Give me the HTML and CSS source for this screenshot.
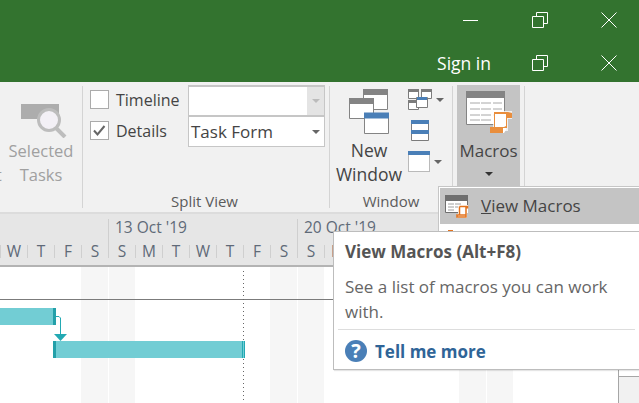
FILE: index.html
```html
<!DOCTYPE html>
<html lang="en">
<head>
<meta charset="utf-8">
<title>Project</title>
<link rel="stylesheet" href="styles.css">
</head>
<body>
<div class="app">
  <header class="titlebar">
    <div class="winrow">
      <svg class="cap cap-min" width="16" height="16" viewBox="0 0 16 16"><path d="M0 8.500h15" stroke="#fff" fill="none"/></svg>
      <svg class="cap" width="16" height="16" viewBox="0 0 16 16"><path d="M.5 4.500h11v11H.5zM4.500 4V.5h11v11H12" stroke="#fff" fill="none"/></svg>
      <svg class="cap cap-x" width="16" height="16" viewBox="0 0 16 16"><path d="M.5.500l15 15M15.500.500l-15 15" stroke="#fff" fill="none"/></svg>
    </div>
    <div class="winrow winrow-2">
      <span class="signin">Sign in</span>
      <svg class="cap" width="16" height="16" viewBox="0 0 16 16"><path d="M.5 4.500h11v11H.5zM4.500 4V.5h11v11H12" stroke="#fff" fill="none"/></svg>
      <svg class="cap cap-x" width="16" height="16" viewBox="0 0 16 16"><path d="M.5.500l15 15M15.500.500l-15 15" stroke="#fff" fill="none"/></svg>
    </div>
  </header>

  <section class="ribbon">
    <div class="group group-zoom">
      <span class="clip-t">t</span>
      <div class="bigbtn disabled">
        <svg class="icon-sel" width="46" height="34" viewBox="0 0 46 34">
          <rect x="0" y="0" width="38" height="15" fill="#adadad"/>
          <circle cx="28" cy="16" r="10.500" fill="#f3f0f6" stroke="#bdbdbd" stroke-width="3"/>
          <path d="M35 24l9 9" stroke="#bdbdbd" stroke-width="4" fill="none"/>
        </svg>
        <span class="biglabel">Selected<br>Tasks</span>
      </div>
    </div>
    <div class="group group-split">
      <div class="group-body split-body">
        <div class="checks">
          <div class="checkrow"><span class="checkbox"></span><span class="checktext">Timeline</span></div>
          <div class="checkrow"><span class="checkbox"><svg width="17" height="17" viewBox="0 0 17 17"><path d="M3 8.500l3.500 4 7-8.500" stroke="#666" stroke-width="2" fill="none"/></svg></span><span class="checktext">Details</span></div>
        </div>
        <div class="combos">
          <div class="combo combo-off"><span class="combo-btn"><i class="tri tri-off"></i></span></div>
          <div class="combo"><span class="combo-text">Task Form</span><span class="combo-btn"><i class="tri"></i></span></div>
        </div>
      </div>
      <div class="grouplabel grouplabel-split">Split View</div>
    </div>
    <div class="group group-window">
      <div class="group-body window-body">
        <div class="bigbtn newwin">
          <svg width="42" height="47" viewBox="0 0 42 47">
            <path d="M14.500 1.500h24v20h-24z" fill="#fff" stroke="#848484"/><rect x="14" y="1" width="25" height="6" fill="#848484"/>
            <path d="M.5 10.500h24v20h-24z" fill="#fff" stroke="#848484"/><rect x="0" y="10" width="25" height="6" fill="#848484"/>
            <path d="M15.500 25.500h24v20h-24z" fill="#fff" stroke="#848484"/><path d="M15 24.500h25v6H15z" fill="#4a7fb7"/>
          </svg>
          <span class="biglabel">New<br>Window</span>
        </div>
        <div class="smallcol">
          <div class="smallbtn">
            <svg width="24" height="21" viewBox="0 0 24 21">
              <path d="M.5.500h10v9h-10zM13.500.500h10v9h-10zM.5 11.500h10v9h-10z" fill="#fff" stroke="#7c7c7c"/>
              <path d="M0 0h11v3H0zM13 0h11v3H13zM0 11h11v3H0z" fill="#7c7c7c"/>
              <path d="M8.500 8.500h11v10h-11z" fill="#fff" stroke="#7c7c7c"/><path d="M9 8h10v3H9z" fill="#4a7fb7"/>
            </svg>
            <i class="tri"></i>
          </div>
          <div class="smallbtn smallbtn-mid">
            <svg width="18" height="21" viewBox="0 0 18 21">
              <path d="M.5.500h17v20H.5z" fill="#fff" stroke="#7c7c7c"/>
              <path d="M0 0h18v4H0zM0 10h18v4H0z" fill="#4a7fb7"/>
            </svg>
          </div>
          <div class="smallbtn">
            <svg width="22" height="21" viewBox="0 0 22 21">
              <path d="M.5 3.500h21v17H.5z" fill="#fff" stroke="#7c7c7c" stroke-dasharray="1 1"/>
              <path d="M0 0h22v4H0z" fill="#4a7fb7"/>
            </svg>
            <i class="tri"></i>
          </div>
        </div>
      </div>
      <div class="grouplabel">Window</div>
    </div>
    <div class="group group-macros">
      <div class="macrobtn">
        <svg width="46" height="43" viewBox="0 0 46 43">
          <path d="M.5.500h38v33H.5z" fill="#fff" stroke="#848484"/>
          <rect x="0" y="0" width="39" height="7" fill="#848484"/>
          <path d="M4 12h10M15 12h10M27 12h9M4 18h10M15 18h10M27 18h9M4 24h10M15 24h10M27 24h9M4 29h10M15 29h10" stroke="#a8a8a8" fill="none"/>
          <path d="M27 20h19v8h-4v12H27z" fill="#fff" opacity=".75"/>
          <path d="M28 21h14l4 1v5h-5v10h-3v-1H28z" fill="#e98e3d"/>
          <path d="M29 23h11v12l-4 2h-7z" fill="#fff"/>
          <path d="M24 36h14v6H24z" fill="#e98e3d"/>
          <path d="M37 37h3v2l-2 3h-1z" fill="#fff"/>
        </svg>
        <span class="macrolabel">Macros</span>
        <i class="tri tri-dark"></i>
      </div>
    </div>
    <div class="group group-rest"></div>
  </section>

  <section class="timescale">
    <div class="weeks">
      <span class="week week-blank"></span>
      <span class="week">13 Oct '19</span>
      <span class="week">20 Oct '19</span>
    </div>
    <div class="days">
      <span class="day">W</span><span class="day">T</span><span class="day">F</span><span class="day">S</span><span class="day">S</span><span class="day">M</span><span class="day">T</span><span class="day">W</span><span class="day">T</span><span class="day">F</span><span class="day">S</span><span class="day">S</span><span class="day">M</span>
    </div>
  </section>

  <section class="chart">
    <div class="shade shade-a"></div>
    <div class="shade shade-b"></div>
    <div class="shade shade-c"></div>
    <div class="shade shade-d"></div>
    <div class="shade shade-e"></div>
    <div class="shade shade-f"></div>
    <div class="hline"></div>
    <div class="dotted"></div>
    <div class="bar bar-1"></div>
    <div class="bar bar-2"></div>
    <svg class="link" width="14" height="25" viewBox="0 0 14 25">
      <path d="M3 .5h3l1.500 1.500v16" stroke="#23a9b3" fill="none"/>
      <path d="M1 18h13l-6.500 7z" fill="#23a9b3"/>
    </svg>
    <div class="pane-corner"></div>
  </section>

  <div class="menu">
    <div class="menuitem">
      <svg width="24" height="23" viewBox="0 0 24 23">
        <path d="M.5.500h22v17H.5z" fill="#fff" stroke="#6f6f6f"/><rect width="23" height="6" fill="#6f6f6f"/>
        <path d="M3 9h6M10 9h6M3 12h6M10 12h6M3 15h6" stroke="#a0a0a0" fill="none"/>
        <path d="M13 10h10v8h-1v5H12v-4h1z" fill="#fff"/>
        <path d="M14.500 11.500h8v2M21 12v9M12 20h9v2h-9zM14.500 11.500v8.500" stroke="#e3731d" stroke-width="1.500" fill="none"/>
      </svg>
      <span class="menutext"><u>V</u>iew Macros</span>
    </div>
    <div class="menu-next"></div>
  </div>

  <div class="tooltip">
    <div class="tip-title">View Macros (Alt+F8)</div>
    <div class="tip-text">See a list of macros you can work with.</div>
    <div class="tip-rule"></div>
    <div class="tip-more">
      <svg width="22" height="22" viewBox="0 0 22 22"><circle cx="11" cy="11" r="11" fill="#4a7fb7"/></svg>
      <span class="tip-q">?</span>
      <span class="tip-link">Tell me more</span>
    </div>
  </div>
</div>
</body>
</html>
```
FILE: styles.css
```css
* { box-sizing: border-box; }
html, body { margin: 0; padding: 0; }
body { width: 639px; height: 403px; overflow: hidden; background: #fff; font-family: "Open Sans", "Noto Sans", sans-serif; color: #444; }
.app { position: relative; width: 639px; height: 403px; overflow: hidden; display: flex; flex-direction: column; }

.titlebar { height: 82px; background: #33732f; padding-top: 12px; flex: none; }
.winrow { display: flex; justify-content: flex-end; align-items: center; height: 16px; padding-right: 22px; gap: 53px; }
.winrow-2 { margin-top: 27px; }
.cap { display: block; flex: none; }
.signin { color: #fff; font-size: 17.5px; margin-right: -12px; line-height: 22px; }

.ribbon { height: 132px; flex: none; display: flex; background: #f1f1f1; border-bottom: 2px solid #dcdcdc; padding-top: 3px; }
.group { display: flex; flex-direction: column; border-right: 1px solid #d4d4d4; height: 122px; margin-top: 1px; flex: none; }
.group-body { display: flex; height: 105px; flex: none; }
.grouplabel { text-align: center; font-size: 15px; line-height: 20px; color: #5b5b5b; height: 17px; }
.grouplabel-split { padding-right: 3px; }
.group-zoom { width: 83px; flex-direction: row; }
.clip-t { font-size: 16px; color: #a2a2a2; margin-top: 78px; width: 9px; margin-left: -4px; line-height: 22px; }
.bigbtn { display: flex; flex-direction: column; align-items: center; }
.bigbtn.disabled { width: 72px; padding-top: 18px; }
.icon-sel { margin-left: 6px; display: block; flex: none; }
.biglabel { font-size: 17.5px; line-height: 24px; text-align: center; margin-top: 4px; white-space: nowrap; }
.disabled .biglabel { color: #a0a0a0; margin-top: 1px; font-size: 16.5px; }

.group-split { width: 247px; }
.split-body { padding: 0 0 0 7px; gap: 7px; }
.checks { width: 91px; flex: none; margin-top: -2px; }
.checkrow { display: flex; align-items: center; height: 31px; gap: 7px; }
.checkbox { width: 19px; height: 19px; background: #fff; border: 1px solid #ababab; display: block; flex: none; }
.checkbox svg { display: block; }
.checktext { font-size: 16px; color: #444; white-space: nowrap; }
.combos { width: 137px; flex: none; margin-top: -1px; }
.combo { height: 31px; background: #fff; border: 1px solid #c6c6c6; display: flex; align-items: center; justify-content: space-between; margin-top: -1px; }
.combo-off { height: 32px; border-width: 2px 1px 2px 1px; margin-top: 0; }
.combo-btn { width: 17px; height: 100%; display: flex; align-items: center; justify-content: center; }
.combo-off .combo-btn { margin-left: auto; background: #e4e4e4; }
.combo-text { font-size: 17px; padding-left: 2px; color: #444; line-height: 22px; white-space: nowrap; }
.tri { display: block; width: 0; height: 0; border-style: solid; border-width: 4px 4px 0 4px; border-color: #666 transparent transparent transparent; }
.tri-off { border-top-color: #bbb; }
.tri-dark { border-top-color: #333; }

.group-window { width: 123px; }
.newwin { width: 78px; padding-top: 2px; }
.newwin svg { flex: none; margin-left: 2px; }
.newwin .biglabel { margin-top: 3px; }
.smallcol { margin-top: -2px; display: flex; flex-direction: column; }
.smallbtn { height: 31px; display: flex; align-items: center; gap: 4px; }
.smallbtn-mid { padding-left: 3px; }

.group-macros { width: 72px; padding-left: 4px; }
.macrobtn { width: 63px; height: 102px; background: #c4c4c4; display: flex; flex-direction: column; align-items: center; padding-top: 6px; margin-top: -1px; flex: none; }
.macrobtn svg { flex: none; }
.macrolabel { font-size: 17px; line-height: 22px; color: #444; margin-top: 6px; }
.macrobtn .tri { margin-top: 10px; }
.group-rest { border: 0; flex: 1; }

.timescale { height: 53px; flex: none; background: #e6e6e6; border-bottom: 2px solid #b3b3b3; }
.weeks { display: flex; height: 31px; padding-top: 5px; }
.week { width: 189px; height: 26px; flex: none; border-left: 1px solid #cfcfcf; font-size: 15.5px; line-height: 16px; padding-left: 6px; color: #5f6a78; white-space: nowrap; }
.week-blank { width: 108px; border: 0; }
.days { display: flex; height: 13px; }
.day { width: 27px; flex: none; text-align: center; font-size: 15.5px; line-height: 12px; color: #5f6a78; border-left: 1px solid #cfcfcf; }

.chart { position: relative; flex: 1; background: #fff; }
.shade { position: absolute; top: 0; bottom: 0; width: 26px; background: #f6f6f6; }
.shade-a { left: 81px; width: 27px; }
.shade-b { left: 109px; }
.shade-c { left: 270px; width: 27px; }
.shade-d { left: 298px; }
.shade-e { left: 459px; width: 27px; }
.shade-f { left: 487px; }
.hline { position: absolute; left: 0; right: 0; top: 32px; height: 1px; background: #7b7b7b; }
.dotted { position: absolute; left: 243px; top: 4px; bottom: 0; width: 1px; background: linear-gradient(#666 25%, transparent 25%) 0 0 / 1px 4px; }
.bar { position: absolute; height: 17px; background: #72cdd4; }
.bar-1 { left: 0; width: 56px; top: 41px; border-right: 3px solid #23a0a9; }
.bar-2 { left: 53px; width: 192px; top: 74px; border-left: 3px solid #23a0a9; border-right: 3px double #23a9b3; }
.link { position: absolute; left: 53px; top: 49px; display: block; }
.pane-corner { position: absolute; left: 618px; right: 0; top: 102px; bottom: 0; background: linear-gradient(#fff 8px, #f1f1f1 8px); border-left: 1px solid #a6a6a6; }
.pane-corner::after { content: ""; display: block; height: 1px; margin-top: 7px; background: #a6a6a6; }

.menu { position: absolute; left: 438px; top: 186px; width: 210px; height: 60px; background: #fff; border: 1px solid #c6c6c6; padding: 1px; }
.menuitem { height: 36px; background: #c4c4c4; display: flex; align-items: center; padding-left: 5px; gap: 12px; }
.menutext { font-size: 17px; color: #444; line-height: 22px; }
.menu-next { width: 5px; height: 2px; margin: 6px 0 0 8px; background: #e3731d; }

.tooltip { position: absolute; left: 333px; top: 231px; width: 320px; height: 139px; background: #fff; border: 1px solid #bdbdbd; box-shadow: 1px 1px 1px rgba(0,0,0,.1); padding: 9px 11px 0; }
.tip-title { font-size: 17px; font-weight: 700; line-height: 22px; color: #555; white-space: nowrap; }
.tip-text { font-size: 17px; line-height: 25px; color: #666; width: 280px; margin-top: 11px; }
.tip-rule { height: 1px; background: #ddd; margin: 5px 6px 0 -7px; }
.tip-more { position: relative; display: flex; align-items: center; height: 30px; margin-top: 6px; gap: 8px; }
.tip-more svg { display: block; flex: none; }
.tip-q { position: absolute; left: 0; top: 0; width: 22px; text-align: center; color: #fff; font-size: 20px; font-weight: 700; line-height: 30px; }
.tip-link { font-size: 17px; font-weight: 700; color: #2f6497; }
```
